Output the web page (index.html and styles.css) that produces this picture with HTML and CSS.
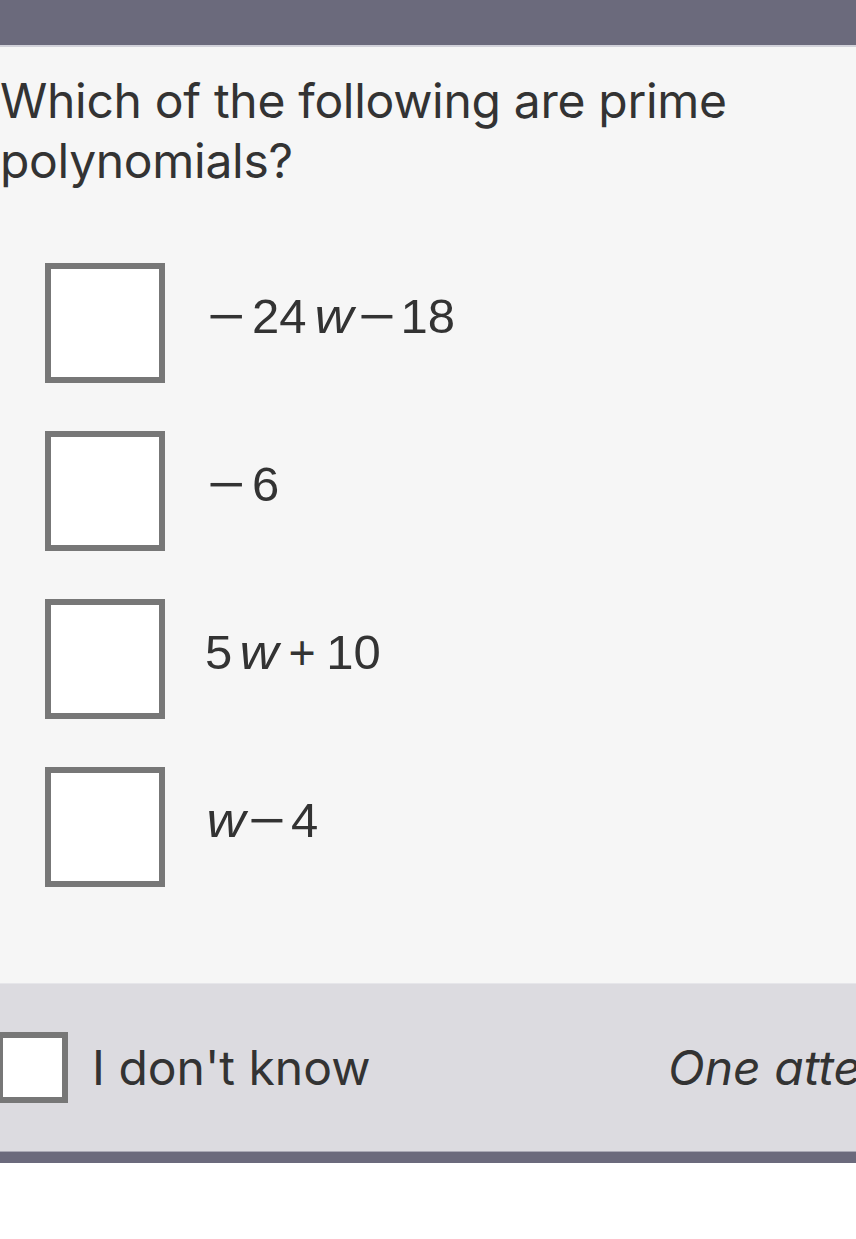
FILE: index.html
```html
<!DOCTYPE html>
<html lang="en">
<head>
<meta charset="utf-8">
<title>Prime polynomials</title>
<link rel="stylesheet" href="styles.css">
</head>
<body>
<div class="page">
  <div class="topbar"></div>
  <main class="content">
    <h1 class="question">Which of the following are prime polynomials?</h1>
    <ul class="options">
      <li class="option">
        <span class="box"></span>
        <span class="math"><span class="neg">−</span><span class="num">24</span><span class="var">w</span><span class="op">−</span><span class="num">18</span></span>
      </li>
      <li class="option">
        <span class="box"></span>
        <span class="math"><span class="neg">−</span><span class="num">6</span></span>
      </li>
      <li class="option">
        <span class="box"></span>
        <span class="math"><span class="num">5</span><span class="var">w</span><span class="op plus">+</span><span class="num">10</span></span>
      </li>
      <li class="option">
        <span class="box"></span>
        <span class="math"><span class="var lead">w</span><span class="op">−</span><span class="num">4</span></span>
      </li>
    </ul>
  </main>
  <footer class="footer">
    <div class="idk">
      <span class="box small"></span>
      <span class="idk-label">I don't know</span>
    </div>
    <span class="attempts">One attempt remaining</span>
  </footer>
  <div class="bottombar"></div>
</div>
</body>
</html>
```

FILE: styles.css
```css
html, body {
  margin: 0;
  padding: 0;
  background: #ffffff;
}

.page {
  width: 856px;
  overflow: hidden;
  font-family: Inter, "Noto Sans", sans-serif;
  color: #333333;
}

.topbar {
  height: 45px;
  background: #6b6a7c;
  border-bottom: 2px solid #d2d2da;
}

.content {
  background: #f6f6f6;
  padding: 24px 0 96px 0;
}

.question {
  margin: 0;
  font-size: 48px;
  font-weight: 400;
  line-height: 60px;
  letter-spacing: -0.3px;
  padding-right: 110px;
}

.options {
  list-style: none;
  margin: 72px 0 0 0;
  padding: 0 0 0 45px;
  display: flex;
  flex-direction: column;
  gap: 48px;
}

.option {
  display: flex;
  align-items: flex-start;
  gap: 40px;
  height: 120px;
}

.box {
  display: block;
  flex: none;
  box-sizing: border-box;
  width: 120px;
  height: 120px;
  border: 6px solid #777777;
  background: #ffffff;
}

.math {
  display: flex;
  align-items: baseline;
  margin-top: 26px;
  font-family: "Liberation Sans", Arial, sans-serif;
  font-size: 49px;
  line-height: 54px;
  color: #333333;
  white-space: nowrap;
}

.num {
  margin: 0 4px;
}

.num:first-child {
  margin-left: 0;
}

.neg {
  display: inline-block;
  width: 43px;
  text-align: center;
  transform: scaleX(1.32);
}

.op {
  display: inline-block;
  width: 40px;
  text-align: center;
  transform: scaleX(1.3);
}

.op.plus {
  transform: scaleX(0.95);
}

.var {
  display: inline-block;
  width: 46px;
  text-align: center;
  font-style: italic;
  transform: scaleX(1.1);
}

.var.lead {
  width: 42px;
}

.footer {
  background: #dcdbe0;
  border-top: 1px solid #e6e6ea;
  height: 167px;
  display: grid;
  grid-template-columns: 668px auto;
  align-items: center;
  border-bottom: 1px solid #a9a8b4;
}

.idk {
  display: flex;
  align-items: center;
  gap: 24px;
  margin-left: -3px;
}

.box.small {
  width: 71px;
  height: 71px;
}

.idk-label {
  font-size: 48px;
  line-height: 58px;
}

.attempts {
  font-size: 48px;
  line-height: 58px;
  font-style: italic;
  white-space: nowrap;
}

.bottombar {
  height: 11px;
  background: #6b6a7c;
}
```
